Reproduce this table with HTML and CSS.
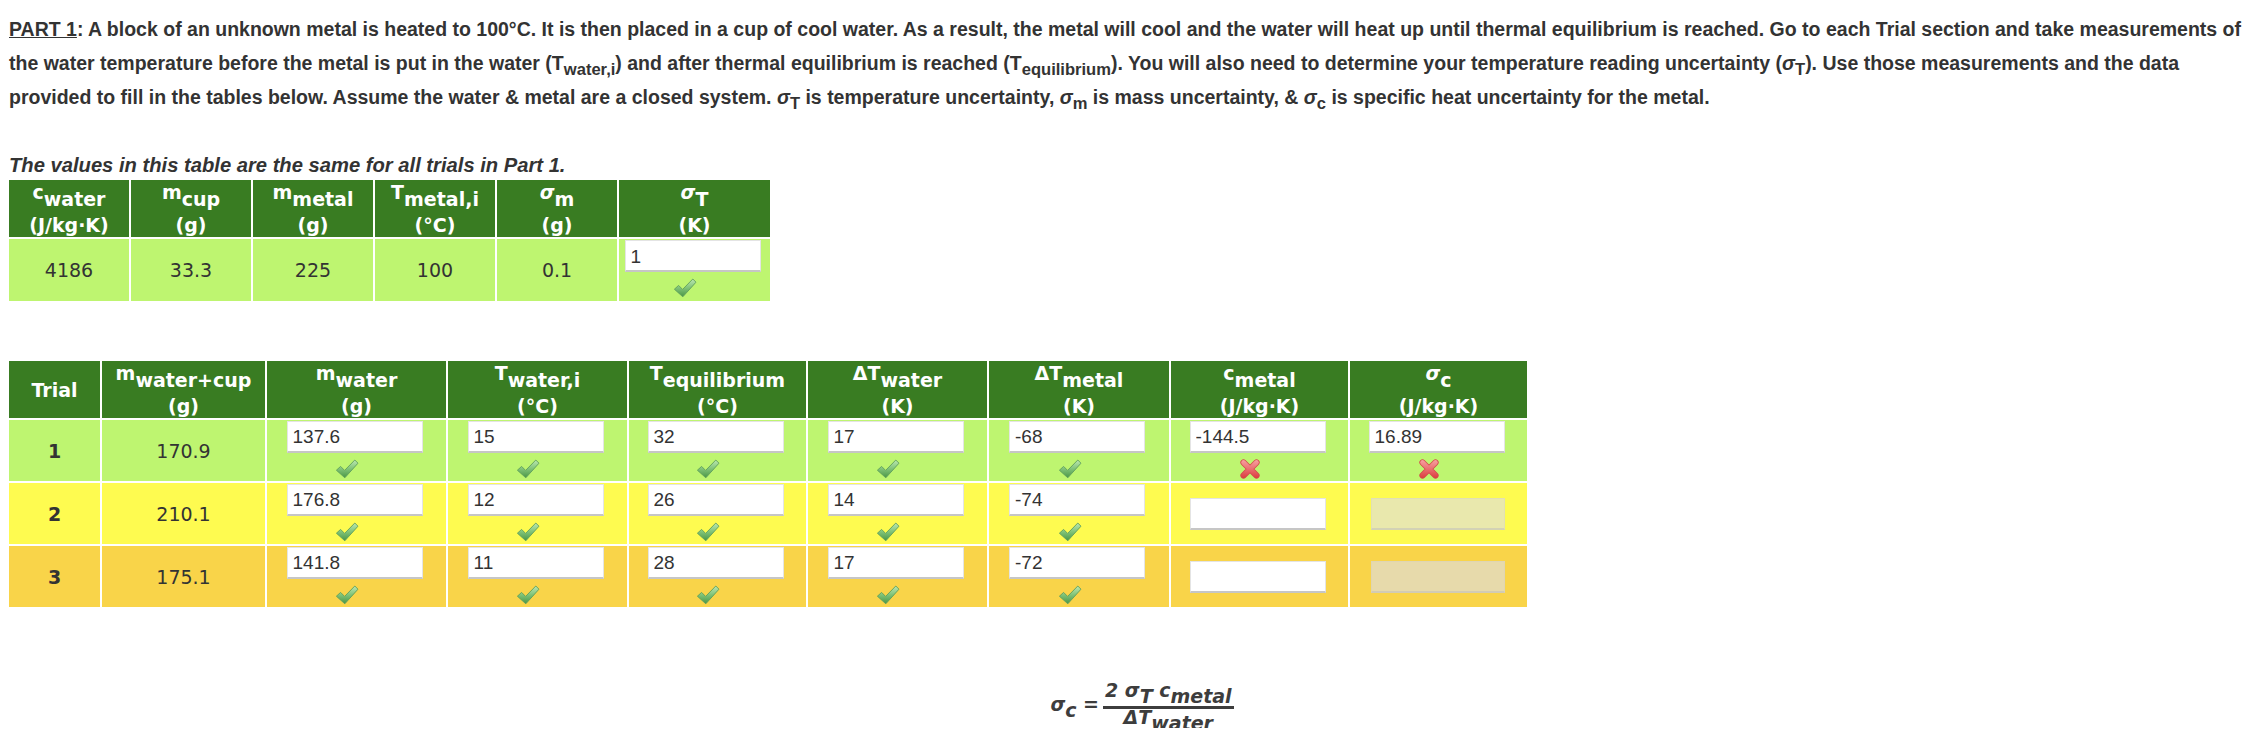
FILE: index.html
```html
<!DOCTYPE html>
<html>
<head>
<meta charset="utf-8">
<link rel="stylesheet" href="styles.css">
</head>
<body>
<svg class="defs" width="0" height="0" aria-hidden="true">
  <defs>
    <linearGradient id="gchk" x1="0" y1="0" x2="0" y2="1">
      <stop offset="0" stop-color="#bde8b1"/>
      <stop offset="0.5" stop-color="#80c378"/>
      <stop offset="1" stop-color="#4a9646"/>
    </linearGradient>
    <linearGradient id="gx" gradientUnits="userSpaceOnUse" x1="0" y1="2" x2="0" y2="20">
      <stop offset="0" stop-color="#f7a0a0"/>
      <stop offset="1" stop-color="#dc3d40"/>
    </linearGradient>
    <symbol id="chk" viewBox="0 0 24 22">
      <path d="M1.4 12.2 L5.6 8.4 L9.6 12.4 L19.8 2 L23 5.2 L9.8 19.8 Z" fill="url(#gchk)" stroke="#5f9f5b" stroke-width="0.9" stroke-linejoin="round"/>
    </symbol>
    <symbol id="xx" viewBox="0 0 22 22">
      <path d="M4.5 4.5 L17.5 17.5 M17.5 4.5 L4.5 17.5" stroke="#d5484b" stroke-width="6.2" stroke-linecap="round" fill="none"/>
      <path d="M4.5 4.5 L17.5 17.5 M17.5 4.5 L4.5 17.5" stroke="url(#gx)" stroke-width="4.6" stroke-linecap="round" fill="none"/>
    </symbol>
  </defs>
</svg>
<div class="page">
  <p class="intro"><u>PART 1</u>: A block of an unknown metal is heated to 100°C. It is then placed in a cup of cool water. As a result, the metal will cool and the water will heat up until thermal equilibrium is reached. Go to each Trial section and take measurements of<br>the water temperature before the metal is put in the water (T<sub>water,i</sub>) and after thermal equilibrium is reached (T<sub>equilibrium</sub>). You will also need to determine your temperature reading uncertainty (<i>σ</i><sub>T</sub>). Use those measurements and the data<br>provided to fill in the tables below. Assume the water &amp; metal are a closed system. <i>σ</i><sub>T</sub> is temperature uncertainty, <i>σ</i><sub>m</sub> is mass uncertainty, &amp; <i>σ</i><sub>c</sub> is specific heat uncertainty for the metal.</p>

  <p class="note">The values in this table are the same for all trials in Part 1.</p>

  <table class="grid consts">
    <tr class="head">
      <th class="w120"><span class="l1">c<sub>water</sub></span><span class="l2">(J/kg·K)</span></th>
      <th class="w120"><span class="l1">m<sub>cup</sub></span><span class="l2">(g)</span></th>
      <th class="w120"><span class="l1">m<sub>metal</sub></span><span class="l2">(g)</span></th>
      <th class="w120"><span class="l1">T<sub>metal,i</sub></span><span class="l2">(°C)</span></th>
      <th class="w120"><span class="l1"><i>σ</i><sub>m</sub></span><span class="l2">(g)</span></th>
      <th class="w151"><span class="l1"><i>σ</i><sub>T</sub></span><span class="l2">(K)</span></th>
    </tr>
    <tr class="r1">
      <td>4186</td>
      <td>33.3</td>
      <td>225</td>
      <td>100</td>
      <td>0.1</td>
      <td class="entry"><input class="ans" value="1"><span class="mark"><svg width="24" height="22"><use href="#chk"/></svg></span></td>
    </tr>
  </table>

  <table class="grid trials">
    <tr class="head">
      <th class="c1 single">Trial</th>
      <th class="c2"><span class="l1">m<sub>water+cup</sub></span><span class="l2">(g)</span></th>
      <th class="c3"><span class="l1">m<sub>water</sub></span><span class="l2">(g)</span></th>
      <th class="c3"><span class="l1">T<sub>water,i</sub></span><span class="l2">(°C)</span></th>
      <th class="c5"><span class="l1">T<sub>equilibrium</sub></span><span class="l2">(°C)</span></th>
      <th class="c3"><span class="l1">ΔT<sub>water</sub></span><span class="l2">(K)</span></th>
      <th class="c7"><span class="l1">ΔT<sub>metal</sub></span><span class="l2">(K)</span></th>
      <th class="c8"><span class="l1">c<sub>metal</sub></span><span class="l2">(J/kg·K)</span></th>
      <th class="c8"><span class="l1"><i>σ</i><sub>c</sub></span><span class="l2">(J/kg·K)</span></th>
    </tr>
    <tr class="r1">
      <td class="trial">1</td>
      <td>170.9</td>
      <td class="entry"><input class="ans" value="137.6"><span class="mark"><svg width="24" height="22"><use href="#chk"/></svg></span></td>
      <td class="entry"><input class="ans" value="15"><span class="mark"><svg width="24" height="22"><use href="#chk"/></svg></span></td>
      <td class="entry"><input class="ans" value="32"><span class="mark"><svg width="24" height="22"><use href="#chk"/></svg></span></td>
      <td class="entry"><input class="ans" value="17"><span class="mark"><svg width="24" height="22"><use href="#chk"/></svg></span></td>
      <td class="entry"><input class="ans" value="-68"><span class="mark"><svg width="24" height="22"><use href="#chk"/></svg></span></td>
      <td class="entry"><input class="ans" value="-144.5"><span class="mark"><svg width="22" height="22"><use href="#xx"/></svg></span></td>
      <td class="entry"><input class="ans" value="16.89"><span class="mark"><svg width="22" height="22"><use href="#xx"/></svg></span></td>
    </tr>
    <tr class="r2">
      <td class="trial">2</td>
      <td>210.1</td>
      <td class="entry"><input class="ans" value="176.8"><span class="mark"><svg width="24" height="22"><use href="#chk"/></svg></span></td>
      <td class="entry"><input class="ans" value="12"><span class="mark"><svg width="24" height="22"><use href="#chk"/></svg></span></td>
      <td class="entry"><input class="ans" value="26"><span class="mark"><svg width="24" height="22"><use href="#chk"/></svg></span></td>
      <td class="entry"><input class="ans" value="14"><span class="mark"><svg width="24" height="22"><use href="#chk"/></svg></span></td>
      <td class="entry"><input class="ans" value="-74"><span class="mark"><svg width="24" height="22"><use href="#chk"/></svg></span></td>
      <td class="entry"><input class="ans" value=""></td>
      <td class="entry"><input class="ans off" value="" disabled></td>
    </tr>
    <tr class="r3">
      <td class="trial">3</td>
      <td>175.1</td>
      <td class="entry"><input class="ans" value="141.8"><span class="mark"><svg width="24" height="22"><use href="#chk"/></svg></span></td>
      <td class="entry"><input class="ans" value="11"><span class="mark"><svg width="24" height="22"><use href="#chk"/></svg></span></td>
      <td class="entry"><input class="ans" value="28"><span class="mark"><svg width="24" height="22"><use href="#chk"/></svg></span></td>
      <td class="entry"><input class="ans" value="17"><span class="mark"><svg width="24" height="22"><use href="#chk"/></svg></span></td>
      <td class="entry"><input class="ans" value="-72"><span class="mark"><svg width="24" height="22"><use href="#chk"/></svg></span></td>
      <td class="entry"><input class="ans" value=""></td>
      <td class="entry"><input class="ans off" value="" disabled></td>
    </tr>
  </table>

  <div class="formula">
    <span class="lhs"><i>σ</i><sub>c</sub> =</span>
    <span class="frac">
      <span class="num">2 <i>σ</i><sub>T</sub> c<sub>metal</sub></span>
      <span class="den">ΔT<sub>water</sub></span>
    </span>
  </div>
</div>
</body>
</html>
```

FILE: styles.css
```css
body {
  margin: 0;
  background: #fff;
  color: #333;
  font-family: "Liberation Sans", Arial, sans-serif;
}

.defs {
  display: block;
  width: 0;
  height: 0;
  overflow: hidden;
}

.page {
  padding: 12px 9px 0 9px;
}

.intro {
  margin: 0;
  font-size: 19.5px;
  font-weight: 700;
  line-height: 34px;
  white-space: nowrap;
}

.intro sub {
  font-size: 85%;
  line-height: 0;
  vertical-align: -0.28em;
}

.note {
  margin: 39px 0 0 0;
  font-size: 20.2px;
  font-weight: 700;
  font-style: italic;
  line-height: 24px;
}

.grid {
  border-collapse: separate;
  border-spacing: 2px;
  margin-left: -2px;
  font-family: "DejaVu Sans", Verdana, sans-serif;
}

.consts {
  margin-top: 1px;
}

.trials {
  margin-top: 56px;
}

.grid th {
  background: #397c22;
  color: #fff;
  font-size: 19px;
  font-weight: 700;
  height: 57px;
  padding: 0;
  text-align: center;
  vertical-align: top;
  box-sizing: border-box;
}

.grid th.single {
  vertical-align: middle;
  line-height: 24px;
}

.grid th .l1 {
  display: block;
  line-height: 24px;
}

.grid th .l2 {
  display: block;
  margin-top: 11px;
  line-height: 20px;
}

.grid th sub {
  font-size: 100%;
  line-height: 0;
  vertical-align: -0.37em;
}

.grid td {
  font-size: 19px;
  color: #333;
  text-align: center;
  vertical-align: middle;
  padding: 0;
  height: 61px;
}

.consts td {
  height: 62px;
}

.grid td.trial {
  font-weight: 700;
}

.r1 td { background: #bef570; }
.r2 td { background: #fefb50; }
.r3 td { background: #f9d449; }

.w120 { width: 120px; }
.w151 { width: 151px; }

.c1 { width: 91px; }
.c2 { width: 163px; }
.c3 { width: 179px; }
.c5 { width: 177px; }
.c7 { width: 180px; }
.c8 { width: 177px; }

.ans {
  display: block;
  box-sizing: border-box;
  width: 136px;
  height: 32px;
  margin: 0 auto;
  position: relative;
  left: -2px;
  padding: 2px 5px 0 5px;
  border: 1px solid #e4e4e4;
  border-bottom: 2px solid #c6c6c6;
  border-radius: 0;
  background: #fff;
  font-family: "Liberation Sans", Arial, sans-serif;
  font-size: 19px;
  color: #333;
  text-align: left;
  outline: none;
}

.ans.off {
  width: 134px;
  left: -1px;
  background: rgba(221, 221, 221, 0.66);
  border-color: rgba(200, 200, 200, 0.25);
  border-bottom-color: rgba(190, 190, 190, 0.5);
}

.mark {
  display: block;
  height: 28px;
  padding-right: 19px;
  box-sizing: border-box;
  padding-top: 5px;
  line-height: 0;
}

.mark svg {
  display: inline-block;
}

.formula {
  margin-top: 70px;
  display: flex;
  justify-content: center;
  align-items: center;
  padding-left: 26px;
  font-family: "DejaVu Sans", Verdana, sans-serif;
  font-weight: 700;
  font-style: italic;
  font-size: 19px;
  color: #3d3d3d;
}

.formula sub {
  font-size: 100%;
  line-height: 0;
  vertical-align: -0.3em;
}

.lhs {
  margin-right: 4px;
  line-height: 22px;
}

.frac {
  display: inline-flex;
  flex-direction: column;
  align-items: center;
}

.num {
  padding: 0 2px 5px 2px;
  border-bottom: 3px solid #3d3d3d;
  line-height: 22px;
}

.den {
  margin-top: -3px;
  line-height: 22px;
}
```
